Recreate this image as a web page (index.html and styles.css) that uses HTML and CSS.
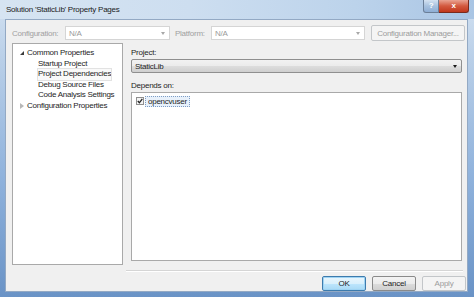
FILE: index.html
```html
<!DOCTYPE html>
<html lang="en">
<head>
  <meta charset="UTF-8">
  <title>Solution 'StaticLib' Property Pages</title>
  <link rel="stylesheet" href="styles.css">
</head>
<body>
  <div class="window">
    <div class="titlebar">
      <span class="title">Solution 'StaticLib' Property Pages</span>
      <div class="caption">
        <span class="cap-help">?</span>
        <span class="cap-close">x</span>
      </div>
    </div>

    <div class="client">
      <div class="config-row">
        <span class="lbl disabled lbl-config"><u>C</u>onfiguration:</span>
        <div class="combo combo-off combo-config"><span>N/A</span><i class="arrow"></i></div>
        <span class="lbl disabled lbl-platform"><u>P</u>latform:</span>
        <div class="combo combo-off combo-platform"><span>N/A</span><i class="arrow"></i></div>
        <button class="btn btn-off btn-manager">C<u>o</u>nfiguration Manager...</button>
      </div>

      <div class="main">
        <div class="tree">
          <div class="node"><i class="tw-open"></i>Common Properties</div>
          <div class="node leaf">Startup Project</div>
          <div class="node leaf"><span class="sel">Project Dependencies</span></div>
          <div class="node leaf">Debug Source Files</div>
          <div class="node leaf">Code Analysis Settings</div>
          <div class="node"><i class="tw-closed"></i>Configuration Properties</div>
        </div>

        <div class="pane">
          <div class="lbl pane-lbl">P<u>r</u>oject:</div>
          <div class="combo combo-ro"><span>StaticLib</span><i class="arrow"></i></div>
          <div class="lbl pane-lbl"><u>D</u>epends on:</div>
          <div class="listbox">
            <div class="check-item">
              <span class="checkbox">
                <svg width="6" height="6" viewBox="0 0 6 6"><path d="M0.8 3 L2.4 4.8 L5.3 0.9" fill="none" stroke="#222" stroke-width="1.3"/></svg>
              </span>
              <span class="focus">opencvuser</span>
            </div>
          </div>
        </div>
      </div>

      <div class="sep"></div>

      <div class="buttons">
        <button class="btn btn-default">OK</button>
        <button class="btn">Cancel</button>
        <button class="btn btn-off"><u>A</u>pply</button>
      </div>
    </div>
  </div>
</body>
</html>
```

FILE: styles.css
```css
body {
  margin: 0;
  font-family: "Liberation Sans", Arial, sans-serif;
  font-size: 8px;
  letter-spacing: -0.25px;
  color: #1e1e1e;
  background: #6f97c8;
}
u { text-decoration: none; }
.window {
  width: 474px;
  height: 297px;
  display: flex;
  flex-direction: column;
  background: linear-gradient(180deg, #d2e1f1 0%, #b9cfe8 20%, #8fb2dc 60%, #6a93c6 100%);
}
.titlebar {
  height: 19px;
  display: flex;
  align-items: flex-start;
  justify-content: space-between;
  background: linear-gradient(90deg, #d6e4f2 0%, #cddef0 40%, #bcd3eb 75%, #a9c5e4 100%);
}
.title {
  padding: 5px 0 0 6px;
  color: #1b1b1b;
}
.caption {
  display: flex;
  margin-right: 5px;
}
.caption span {
  height: 12px;
  line-height: 11px;
  text-align: center;
  color: #fff;
  font-weight: 700;
  font-size: 8px;
  border: 1px solid #6b7f98;
  border-top: none;
}
.cap-help {
  width: 14px;
  background: linear-gradient(180deg, #d4e2f1, #a8c2df 50%, #8eaed5);
  border-radius: 0 0 0 3px;
}
.cap-close {
  width: 29px;
  background: linear-gradient(180deg, #e9a392, #d3593f 50%, #c0371c);
  border-left: none !important;
  border-radius: 0 0 3px 0;
  border-color: #7a2a1c !important;
}

.client {
  flex: 1;
  margin: 0 6px 5px 5px;
  background: #f0f0f0;
  border: 1px solid #93a9c4;
  display: flex;
  flex-direction: column;
}
.config-row {
  display: flex;
  align-items: center;
  height: 16px;
  margin-top: 5px;
  padding-left: 6px;
}
.lbl.disabled { color: #a0a0a0; }
.lbl-config { width: 53px; }
.lbl-platform { width: 36px; margin-left: 5px; }
.combo {
  height: 12px;
  border: 1px solid #b5b5b5;
  display: flex;
  align-items: center;
  justify-content: space-between;
  padding: 0 4px 0 3px;
  box-sizing: content-box;
}
.combo-off {
  background: #fff;
  border-color: #d5d5d5;
  color: #9a9a9a;
}
.combo-off .arrow { border-top-color: #a8a8a8; }
.combo-config { width: 96px; }
.combo-platform { width: 145px; }
.arrow {
  width: 0;
  height: 0;
  border-left: 2.5px solid transparent;
  border-right: 2.5px solid transparent;
  border-top: 3px solid #1a1a1a;
}
.btn {
  font-family: inherit;
  font-size: 8px;
  letter-spacing: -0.25px;
  height: 15px;
  width: 45px;
  padding: 0;
  color: #1e1e1e;
  border: 1px solid #8a8a8a;
  border-radius: 2px;
  background: linear-gradient(180deg, #f3f3f3 0%, #ebebeb 50%, #dcdcdc 51%, #cfcfcf 100%);
}
.btn-off {
  color: #9c9c9c;
  border-color: #c3c6c9;
  background: #f4f4f4;
}
.btn-manager {
  width: 94px;
  height: 16px;
  margin-left: 6px;
}
.btn-default {
  border-color: #3d7bad;
  box-shadow: inset 0 0 0 1px #9fd4f4;
  background: linear-gradient(180deg, #eaf6fd 0%, #d9f0fc 50%, #bee6fd 51%, #a7d9f5 100%);
}

.main {
  display: flex;
  margin-top: 2px;
  padding-left: 6px;
}
.tree {
  width: 111px;
  height: 222px;
  background: #fff;
  border: 1px solid #a9a9a9;
  padding-top: 4px;
  box-sizing: border-box;
}
.node {
  height: 10.6px;
  line-height: 10.6px;
  padding-left: 7px;
  display: flex;
  align-items: center;
  white-space: nowrap;
}
.node.leaf { padding-left: 25px; }
.sel {
  outline: 1px solid #e2e2e2;
  background: #f9f9f9;
}
.tw-open {
  width: 0;
  height: 0;
  border-left: 4px solid transparent;
  border-bottom: 4px solid #3c3c3c;
  margin-right: 3px;
}
.tw-closed {
  width: 0;
  height: 0;
  border-top: 3px solid transparent;
  border-bottom: 3px solid transparent;
  border-left: 4px solid #b8b8b8;
  margin-right: 3px;
}
.pane {
  display: flex;
  flex-direction: column;
  width: 331px;
  margin-left: 8px;
}
.pane-lbl {
  height: 11px;
  line-height: 11px;
  margin-top: 4px;
  margin-bottom: 1px;
}
.combo-ro {
  background: linear-gradient(180deg, #f2f2f2 0%, #ebebeb 50%, #dddddd 51%, #cfcfcf 100%);
  border-color: #8f8f8f;
  border-radius: 2px;
  margin-bottom: 3px;
}
.listbox {
  height: 169px;
  background: #fff;
  border: 1px solid #a9a9a9;
  box-sizing: border-box;
}
.check-item {
  display: flex;
  align-items: center;
  margin: 3px 0 0 4px;
  height: 10px;
}
.checkbox {
  width: 6px;
  height: 6px;
  border: 1px solid #8f8f8f;
  background: #f4f4f4;
  display: flex;
  margin-right: 1px;
}
.checkbox svg { display: block; }
.focus {
  padding: 0 2px;
  border: 1px dotted #7c9cc4;
  background: #e8f1fb;
  line-height: 9px;
}
.sep {
  height: 0;
  border-top: 1px solid #d5d5d5;
  border-bottom: 1px solid #fff;
  margin: 5px 4px 0 120px;
}
.buttons {
  display: flex;
  justify-content: flex-end;
  gap: 6px;
  margin-top: 4px;
  padding-right: 1px;
}
.buttons .btn { width: 44px; }
```
